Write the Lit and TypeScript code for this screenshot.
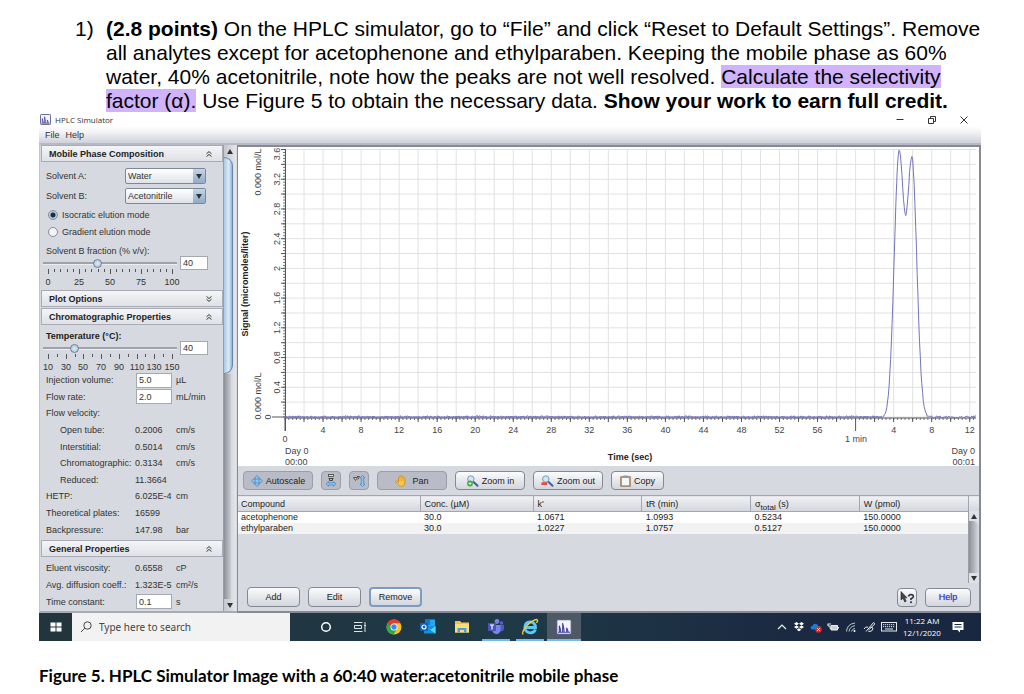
import { LitElement, html, svg, css, TemplateResult } from "lit";
import { customElement } from "lit/decorators.js";
import { classMap } from "lit/directives/class-map.js";

const range = (n: number): number[] => Array.from({ length: n }, (_, i) => i);

/* ---------- Chromatogram ---------- */

const X0 = 285;
const Y0 = 417;
const PX_PER_SEC = 9.51;
const PX_PER_UNIT = 74.3;

const xAt = (sec: number): number => X0 + sec * PX_PER_SEC;
const yAt = (v: number): number => Y0 - v * PX_PER_UNIT;

function tracePoints(): string {
  const peaks = [
    { t: 64.56, sigma: 0.505, h: 3.5 },
    { t: 65.94, sigma: 0.505, h: 3.41 },
  ];
  const pts: string[] = [];
  let seed = 11;
  for (let t = 0; t <= 72.7; t += 0.08) {
    seed = (seed * 1103515245 + 12345) % 2147483648;
    const noise = (seed / 2147483648 - 0.5) * 0.035;
    const v = peaks.reduce((s, p) => s + p.h * Math.exp(-((t - p.t) ** 2) / (2 * p.sigma ** 2)), 0);
    pts.push(`${xAt(t).toFixed(1)},${yAt(v + noise).toFixed(1)}`);
  }
  return pts.join(" ");
}

@customElement("signal-plot")
export class SignalPlot extends LitElement {
  static styles = css`
    :host { display: block; background: #fff; }
    svg { display: block; width: 100%; height: auto; }
    text { font: 9px "Liberation Sans", Arial, sans-serif; fill: #444; }
    .title { font-weight: bold; fill: #222; }
    .grid { stroke: #e2e2e2; stroke-width: 1; }
    .axis { stroke: #555; stroke-width: 1; }
    .minor { stroke: #777; stroke-width: 1; }
    .trace { fill: none; stroke: #7474bd; stroke-width: 1; }
    .base { stroke: #7474bd; stroke-width: 1; }
    .mid { text-anchor: middle; }
    .end { text-anchor: end; }
  `;

  render() {
    const ySteps = range(19);
    const xSteps = range(37);
    return html`<svg viewBox="238 147 741 319" role="img" aria-label="Signal against time">
      ${ySteps.map((i) => svg`<line class="grid" x1=${X0} x2="976" y1=${yAt(i * 0.2)} y2=${yAt(i * 0.2)} />`)}
      ${xSteps.map((i) => svg`<line class="grid" x1=${xAt(i * 2)} x2=${xAt(i * 2)} y1="149" y2=${Y0} />`)}
      ${range(91).map((i) => svg`<line class="minor" x1="283" x2="285" y1=${yAt(i * 0.04)} y2=${yAt(i * 0.04)} />`)}
      ${ySteps.map((i) => svg`<line class="axis" x1=${i === 0 ? 272 : 281} x2="285" y1=${yAt(i * 0.2)} y2=${yAt(i * 0.2)} />`)}
      ${range(182).map((i) => svg`<line class="minor" x1=${xAt(i * 0.4)} x2=${xAt(i * 0.4)} y1="418" y2="420" />`)}
      ${xSteps.map((i) => svg`<line class="axis" x1=${xAt(i * 2)} x2=${xAt(i * 2)} y1="418" y2=${i % 30 === 0 ? 431 : 422} />`)}
      <line class="axis" x1="285.5" x2="285.5" y1="149" y2="431" />
      <line class="axis" x1="285" x2="976" y1="418" y2="418" />
      <line class="base" x1="285" x2="882" y1="417" y2="417" />
      <polyline class="trace" points=${tracePoints()} />
      ${range(10).map((i) => svg`<text class="mid" transform="translate(${i === 0 ? 271 : 280} ${i === 9 ? 154 : yAt(i * 0.4)}) rotate(-90)">${
        i === 0 ? "0" : String(Math.round(i * 4) / 10)}</text>`)}
      ${range(18).filter((i) => i !== 14).map((i) => {
        const sec = (i + 1) * 4;
        return svg`<text class="mid" x=${xAt(sec)} y="433">${sec % 60}</text>`;
      })}
      <text class="mid" x="285" y="442">0</text>
      <text class="mid" x="856" y="442">1 min</text>
      <text x="285" y="454">Day 0</text>
      <text x="285" y="465">00:00</text>
      <text class="end" x="975" y="454">Day 0</text>
      <text class="end" x="975" y="465">00:01</text>
      <text class="title mid" x="630" y="460">Time (sec)</text>
      <text class="title mid" transform="translate(248 284) rotate(-90)">Signal (micromoles/liter)</text>
      <text class="mid" transform="translate(261 172) rotate(-90)">0.000 mol/L</text>
      <text class="mid" transform="translate(261 396) rotate(-90)">0.000 mol/L</text>
    </svg>`;
  }
}

/* ---------- Icons ---------- */

const appIcon = (size: number) => html`<svg width=${size} height=${size} viewBox="0 0 12 12" aria-hidden="true">
  <rect x="0.5" y="0.5" width="11" height="11" rx="1" fill="#f4f4fb" stroke="#5a5a8c" />
  <path d="M1.500 10H10.500M2.500 10V5L3.500 8.500V10M5 10V3L6 8V10M8 10V6.500L9 9V10" fill="none" stroke="#40409a" stroke-width="0.800" /></svg>`;

const chevrons = (open: boolean) => html`<svg width="6" height="6" viewBox="0 0 6 6" aria-hidden="true">
  <path d=${open ? "M0.500 2.800L3 0.600L5.500 2.800M0.500 5.600L3 3.400L5.500 5.600" : "M0.500 0.400L3 2.600L5.500 0.400M0.500 3.200L3 5.400L5.500 3.200"}
    fill="none" stroke="#333" /></svg>`;

const arrow = (up: boolean) => html`<svg width="6" height="5" viewBox="0 0 6 5" aria-hidden="true">
  <path d=${up ? "M3 0L6 5H0Z" : "M0 0H6L3 5Z"} fill="#333" /></svg>`;

const autoscaleIcon = html`<svg width="12" height="12" viewBox="0 0 12 12" aria-hidden="true">
  <path d="M6 0.500L8.500 3H7V5H9V3.500L11.500 6L9 8.500V7H7V9H8.500L6 11.500L3.500 9H5V7H3V8.500L0.500 6L3 3.500V5H5V3H3.500Z" fill="#8fc4ee" stroke="#3f83c0" stroke-width="0.700" /></svg>`;

const autoXIcon = html`<svg width="12" height="13" viewBox="0 0 12 13" aria-hidden="true">
  <rect x="3.500" y="0.500" width="5" height="2" fill="#ddd" stroke="#444" stroke-width="0.800" />
  <path d="M3.500 4.500H8.500M4.500 4V6.500H7.500V4" fill="none" stroke="#444" />
  <path d="M1 9.800L3.500 7.500V8.700H8.500V7.500L11 9.800L8.500 12.200V11H3.500V12.200Z" fill="#8fc4ee" stroke="#3f83c0" stroke-width="0.700" /></svg>`;

const autoYIcon = html`<svg width="13" height="12" viewBox="0 0 13 12" aria-hidden="true">
  <path d="M0.500 2.500H4.500L2.500 5.500ZM4 1.500H6.500L5 4.500" fill="#ddd" stroke="#444" stroke-width="0.900" />
  <path d="M9.500 0.500L12 3H10.700V9H12L9.500 11.500L7 9H8.300V3H7Z" fill="#8fc4ee" stroke="#3f83c0" stroke-width="0.700" /></svg>`;

const handIcon = html`<svg width="12" height="12" viewBox="0 0 12 12" aria-hidden="true">
  <path d="M3.500 7.500V2.500Q4.200 1.500 5 2.500V1.200Q5.800 0.300 6.500 1.200V1.800Q7.400 0.900 8.200 1.900V3Q9.300 2.300 9.900 3.300V8Q9.500 11.300 6.500 11.500Q4 11.500 2.800 9.500L0.700 6.500Q1.200 5.200 2.300 6Z" fill="#f8c64b" stroke="#c98a1c" stroke-width="0.800" />
  <path d="M5 2.500V6M6.600 2V6M8.200 3V6" stroke="#d99a2a" stroke-width="0.600" /></svg>`;

const zoomIcon = (plus: boolean) => html`<svg width="13" height="12" viewBox="0 0 13 12" aria-hidden="true">
  <path d="M7 6.500L11.500 10.800" stroke="#3a62a0" stroke-width="2" stroke-linecap="round" />
  <circle cx="4.800" cy="4" r="3.200" fill="#cfe6f7" stroke="#7d9bb5" />
  ${plus
    ? svg`<circle cx="4" cy="8.500" r="2.900" fill="#43a843" /><path d="M4 7V10M2.500 8.500H5.500" stroke="#d8f5d8" />`
    : svg`<rect x="0.300" y="7.300" width="6" height="2.800" rx="0.600" fill="#e2503c" />`}</svg>`;

const copyIcon = html`<svg width="11" height="12" viewBox="0 0 11 12" aria-hidden="true">
  <rect x="0.700" y="1.700" width="9.600" height="9.600" fill="#c69763" stroke="#9a7044" stroke-width="0.700" />
  <rect x="2" y="3" width="7" height="7.200" fill="#eef8ff" /><rect x="3.500" y="0.500" width="4" height="2" fill="#999" /></svg>`;

const helpPointer = html`<svg width="15" height="13" viewBox="0 0 15 13" aria-hidden="true">
  <path d="M1 0.500V9L3 7.200L4.800 11L6.200 10.200L4.500 6.800H7Z" fill="#444" stroke="#222" stroke-width="0.600" />
  <path d="M8.500 5.500Q8.800 3.500 11 3.500Q13.500 3.600 13.300 5.700Q13.100 7 11 7.800V9" fill="none" stroke="#334" stroke-width="1.700" />
  <rect x="10.100" y="10.300" width="1.800" height="1.800" fill="#334" /></svg>`;

const taskIcons: { name: string; cls: string; icon: TemplateResult }[] = [
  { name: "Cortana", cls: "", icon: html`<svg width="18" height="18" viewBox="0 0 18 18"><circle cx="9" cy="9" r="4.300" fill="none" stroke="#fff" stroke-width="1.500" /></svg>` },
  { name: "Task View", cls: "", icon: html`<svg width="18" height="18" viewBox="0 0 18 18"><path d="M3 4.500H11.500M3 13.500H11.500M3.500 7.500H10.500V10.500H3.500ZM14 4V14M13 7.500H15" fill="none" stroke="#dfe4e6" /></svg>` },
  { name: "Chrome", cls: "", icon: html`<svg width="18" height="18" viewBox="0 0 18 18"><circle cx="9" cy="9" r="7.500" fill="#fbc116" /><path d="M9 9L5.750 7L2.500 5.250A7.500 7.500 0 0 0 8.500 16.500L12 11Z" fill="#2da94f" /><path d="M5.750 8L2.500 5.250A7.500 7.500 0 0 1 15.500 5.250H9Z" fill="#e33b2e" /><circle cx="9" cy="9" r="3.500" fill="#fff" /><circle cx="9" cy="9" r="2.700" fill="#4285f4" /></svg>` },
  { name: "Outlook", cls: "", icon: html`<svg width="18" height="18" viewBox="0 0 18 18"><rect x="6" y="1.500" width="10" height="12" fill="#28a8ea" /><path d="M6 1.500H11V7H6Z" fill="#0f78d4" /><path d="M5 8L16.500 8V15.500H5Z" fill="#1490df" /><path d="M7 9L11 12L16.500 8V15.500" fill="#50d9ff" /><rect x="1" y="5" width="8" height="8" rx="0.700" fill="#0a64b8" /><circle cx="5" cy="9" r="2" fill="none" stroke="#fff" stroke-width="1.200" /></svg>` },
  { name: "File Explorer", cls: "", icon: html`<svg width="18" height="18" viewBox="0 0 18 18"><path d="M2 3H7L8.500 4.500H16V14.500H2Z" fill="#f6c143" /><path d="M2 6H16V14.500H2Z" fill="#fddc7c" /><path d="M4.500 14.500V10H13.500V14.500H11V12H7V14.500Z" fill="#4a9fe0" /></svg>` },
  { name: "Teams", cls: "running", icon: html`<svg width="18" height="18" viewBox="0 0 18 18"><circle cx="14.500" cy="5" r="1.700" fill="#5b62c4" /><circle cx="10" cy="3.500" r="2.400" fill="#7b83eb" /><path d="M12 7H17V11Q16.500 14 13 13.500Z" fill="#5059c9" /><path d="M5 7H13.500V12Q13 16 9.500 16.200Q6 16 5 12Z" fill="#7b83eb" /><rect x="1" y="5" width="8" height="8" rx="0.700" fill="#4b53bc" /><path d="M3 7H7M5 7V11.500" stroke="#fff" stroke-width="1.200" /></svg>` },
  { name: "Internet Explorer", cls: "running", icon: html`<svg width="18" height="18" viewBox="0 0 18 18"><path d="M14.500 11.500Q13.200 14.800 9.200 14.800Q4 14.500 3.800 9.300Q4 4 9.200 3.800Q14.300 4 14.500 9.500H5" fill="none" stroke="#5cc8f5" stroke-width="2.800" /><path d="M2 16.500Q0.500 14 5.500 8Q12 1.500 15.800 1.500Q17.500 2 15.500 5" fill="none" stroke="#f3cf45" stroke-width="1.300" /></svg>` },
  { name: "HPLC Simulator", cls: "active", icon: appIcon(16) },
];

const trayIcons: { name: string; icon: TemplateResult }[] = [
  { name: "Show hidden icons", icon: html`<svg width="12" height="12" viewBox="0 0 12 12"><path d="M2 8L6 4L10 8" fill="none" stroke="#eee" stroke-width="1.200" /></svg>` },
  { name: "Dropbox", icon: html`<svg width="12" height="12" viewBox="0 0 12 12"><path d="M3.500 1L6 2.700L3.500 4.400L1 2.700ZM8.500 1L11 2.700L8.500 4.400L6 2.700ZM3.500 4.400L6 6.100L3.500 7.800L1 6.100ZM8.500 4.400L11 6.100L8.500 7.800L6 6.100ZM6 7.200L8.300 8.700L6 10.300L3.700 8.700Z" fill="#fff" /></svg>` },
  { name: "OneDrive", icon: html`<svg width="12" height="12" viewBox="0 0 12 12"><path d="M2.500 8.500Q0 8 0.800 6Q1.500 4.800 2.500 5Q3.500 2 6.300 3Q8 3.500 8.200 5Q11 5 11 7Q10.500 8.500 9 8.500Z" fill="#1680d8" /><circle cx="8.500" cy="8.500" r="3.200" fill="#d92b2b" /><path d="M7.200 7.200L9.800 9.800M9.800 7.200L7.200 9.800" stroke="#fff" /></svg>` },
  { name: "Battery", icon: html`<svg width="12" height="12" viewBox="0 0 12 12"><path d="M4 4.500H10.500V9H4Z" fill="#ccc" stroke="#eee" /><path d="M11.500 6V7.500M0.500 3H4M1 3V5H3V7.500H4" stroke="#eee" fill="none" /></svg>` },
  { name: "Wi-Fi", icon: html`<svg width="12" height="12" viewBox="0 0 12 12"><path d="M1.500 10.500Q2 3 10 2M4 10.500Q4.500 5.500 10 4.700M6.500 10.500Q7 8 10 7.400" fill="none" stroke="#bcc6cf" /><circle cx="9.500" cy="10" r="1" fill="#fff" /></svg>` },
  { name: "Pen", icon: html`<svg width="14" height="12" viewBox="0 0 14 12"><path d="M3 10.500L10.500 1.500L12 2.800L5.500 9M1 8Q2 5.500 5 6M5.500 10.500Q9 11 10 8Q10 5.500 7.500 6.500" fill="none" stroke="#e6eaee" /></svg>` },
  { name: "Keyboard", icon: html`<svg width="16" height="12" viewBox="0 0 16 12"><rect x="0.500" y="1.500" width="15" height="8.500" fill="none" stroke="#e6eaee" /><path d="M2 3.700H14M2 5.700H14" stroke="#e6eaee" stroke-dasharray="1.200 0.800" /><path d="M4 8H12" stroke="#e6eaee" /></svg>` },
];

/* ---------- Application ---------- */

type Row = { label: string; value: string; unit?: string; indent?: boolean; edit?: boolean };

const chromatographic: Row[] = [
  { label: "Injection volume:", value: "5.0", unit: "µL", edit: true },
  { label: "Flow rate:", value: "2.0", unit: "mL/min", edit: true },
  { label: "Flow velocity:", value: "" },
  { label: "Open tube:", value: "0.2006", unit: "cm/s", indent: true },
  { label: "Interstitial:", value: "0.5014", unit: "cm/s", indent: true },
  { label: "Chromatographic:", value: "0.3134", unit: "cm/s", indent: true },
  { label: "Reduced:", value: "11.3664", indent: true },
  { label: "HETP:", value: "6.025E-4", unit: "cm" },
  { label: "Theoretical plates:", value: "16599" },
  { label: "Backpressure:", value: "147.98", unit: "bar" },
];

const general: Row[] = [
  { label: "Eluent viscosity:", value: "0.6558", unit: "cP" },
  { label: "Avg. diffusion coeff.:", value: "1.323E-5", unit: "cm²/s" },
  { label: "Time constant:", value: "0.1", unit: "s", edit: true },
];

const compounds = [
  ["acetophenone", "30.0", "1.0671", "1.0993", "0.5234", "150.0000"],
  ["ethylparaben", "30.0", "1.0227", "1.0757", "0.5127", "150.0000"],
];

@customElement("app-root")
export class AppRoot extends LitElement {
  static styles = css`
    :host { display: block; background: #fff; color: #000; font-family: "Liberation Sans", Arial, sans-serif; }
    * { box-sizing: border-box; }
    svg { display: block; flex: none; }
    button, input, select { font: inherit; color: inherit; margin: 0; border-radius: 0; }
    button { padding: 0; border: 0; background: none; }

    .page { padding: 17px 43px 0 39px; }
    .question { padding: 0 0 0 67px; display: flex; font-size: 21px; line-height: 24px; }
    .number { flex: none; width: 31px; margin-left: -31px; }
    .question p { margin: 0; flex: 1; }
    mark { background: #d0b3fb; color: inherit; }

    .window { font-size: 9px; line-height: 10px; color: #333; background: #d6d9df; }
    .titlebar { display: flex; align-items: center; height: 13px; padding: 0 11px 0 1px; background: #fff; font-size: 8px; font-family: "Open Sans", sans-serif; }
    .titlebar .name { flex: 1; margin-left: 4px; }
    .titlebar button { width: 12px; margin-left: 20px; display: flex; justify-content: center; }
    .menubar { display: flex; gap: 6px; height: 17px; align-items: center; padding-left: 6px; background: linear-gradient(#fff, #f0f1f4 40%, #cfd1da); }
    .body { display: grid; grid-template-columns: 198px minmax(0, 1fr); border-top: 2px solid #b7b9c5; }

    .side { display: grid; grid-template-columns: 184px 12px; border-bottom: 2px solid #a8abb5; border-left: 1px solid #c3c6cf; height: 468px; overflow: hidden; }
    .panels { padding-left: 1px; border-right: 1px solid #9a9da6; }
    .section-head { display: flex; width: 100%; height: 17px; align-items: center; justify-content: space-between; padding: 0 10px 0 7px; font-weight: bold; color: #222; border: 1px solid #a9acb6; background: linear-gradient(#f4f5f7, #dfe1e6); }
    .gap-above { margin-top: 1px; }
    .section { padding-left: 5px; }
    .solvents { padding-top: 4px; }
    .solvent { display: grid; grid-template-columns: 79px 81px; height: 20px; align-items: center; }
    .combo { display: grid; grid-template-columns: 1fr 12px; height: 16px; border: 1px solid #7c8798; border-radius: 2px; background: linear-gradient(#fff, #dfe2e8); overflow: hidden; }
    .combo select { grid-area: 1 / 1 / 2 / 3; appearance: none; border: 0; background: none; padding: 0 0 0 2px; }
    .combo span { grid-area: 1 / 2; display: grid; place-items: center; background: linear-gradient(#c3d5e8, #8fabc9); pointer-events: none; }
    .radio { display: flex; align-items: center; gap: 4px; height: 17px; padding-left: 2px; }
    .radio input { appearance: none; width: 10px; height: 10px; border: 1px solid #858b96; border-radius: 50%; background: #f3f4f6; }
    .radio input:checked { background: radial-gradient(#1f2b3a 2px, #b4cde4 3px); }
    .slider-label { display: block; margin-top: 6px; }
    .bold { font-weight: bold; color: #222; }
    .slider { display: grid; grid-template-columns: 136px 29px; height: 34px; margin-left: -3px; }
    .slider.compact { height: 31px; }
    .slider input[type="range"] { appearance: none; display: block; width: 134px; height: 12px; margin: 1px 0 0; background: none; }
    .slider input[type="range"]::-webkit-slider-runnable-track { height: 3px; background: #9ea2ab; border-bottom: 1px solid #eceef2; }
    .slider input[type="range"]::-webkit-slider-thumb { appearance: none; width: 9px; height: 9px; margin-top: -3px; border: 1px solid #6d8197; border-radius: 50%; background: radial-gradient(#dce9f5, #a7bfd6); }
    .slider svg text { font-size: 9px; fill: #333; text-anchor: middle; }
    .slider svg { overflow: visible; }
    .field { width: 36px; height: 15px; margin-left: 1px; padding: 0 2px; border: 1px solid #a5a8b0; background: #fff; }
    .slider .field { width: 28px; height: 14px; }
    .rows { display: grid; height: 166px; grid-auto-rows: 1fr; }
    .rows.short { height: 51px; margin-top: 2px; }
    .row { display: grid; grid-template-columns: 89px 41px 1fr; align-items: center; white-space: nowrap; }
    .indent { padding-left: 14px; }
    .last-head { margin-top: 2px; }

    .vscroll { display: flex; flex-direction: column; align-items: center; background: linear-gradient(90deg, #c4c7ce, #e4e6ea); }
    .vscroll svg { margin: 4px 0 3px; }
    .vscroll .thumb { width: 9px; height: 217px; align-self: flex-start; border: 1px solid #6685a6; border-left: 0; border-radius: 0 9px 9px 0; background: linear-gradient(90deg, #a9c9e6, #dcecf8 60%, #8fb3d6); }
    .vscroll .track { flex: 1; width: 7px; align-self: flex-start; background: linear-gradient(90deg, #8d9098, #c9ccd2); }

    .main { display: flex; flex-direction: column; border: 1px solid #878a95; border-width: 2px 2px 2px 1px; }
    .tools { display: flex; align-items: center; height: 29px; padding-left: 5px; gap: 8px; }
    .btn { display: flex; align-items: center; justify-content: center; gap: 3px; height: 19px; width: 70px; color: #222; border: 1px solid #858994; border-radius: 4px; background: linear-gradient(#fcfcfd, #e6e8ec 50%, #d3d6dd); }
    .btn.on { background: #b9bcc6; border-color: #9a9daa; }
    .btn.small { width: 20px; }
    .btn.copy { width: 53px; }
    .btn.pan { gap: 5px; }
    .btn.plain { width: 53px; height: 20px; }
    .btn.focus { border: 2px solid #7d9cc0; }
    .grow { flex: 1; }
    .btn.help { width: 46px; color: #3030b8; text-shadow: 0 0 1px #8c8ce0; }

    .table-area { display: grid; height: 88px; align-items: start; }
    table { grid-area: 1 / 1; width: 100%; table-layout: fixed; border-collapse: collapse; color: #222; }
    th { height: 16px; padding: 0 3px; text-align: left; font-weight: normal; border: 1px solid #a3a6b0; border-width: 1px 0 1px 1px; background: linear-gradient(#f0f1f4, #d3d6dd); white-space: nowrap; }
    th:first-child { width: 182px; border-left: 0; }
    th:nth-child(2) { width: 113px; }
    th.scroll-col { width: 11px; padding: 0; }
    td { height: 11px; line-height: 11px; padding: 0 3px; background: #fff; }
    th:not(:first-child), td:not(:first-child) { padding-left: 4px; }
    tbody tr:nth-child(2) td { background: #f2f2f2; }
    sub { font-size: 8px; vertical-align: -3px; line-height: 0; }
    .list-scroll { grid-area: 1 / 1; justify-self: end; margin-top: 16px; width: 11px; height: 72px; display: flex; flex-direction: column; align-items: center; background: #dfe1e6; border-left: 1px solid #9a9da6; }
    .list-scroll svg { margin: 3px 0 2px; }
    .list-scroll .bar { flex: 1; width: 100%; background: linear-gradient(90deg, #8d9098, #d9dbe0); border-radius: 0 6px 0 0; }
    .foot { display: flex; align-items: center; height: 28px; padding: 0 8px 0 9px; gap: 8px; }

    .taskbar { display: flex; height: 28px; background: linear-gradient(90deg, #22343c, #1f3947 50%, #1a2740 85%); color: #fff; }
    .taskbar button { display: grid; place-items: center; flex: none; width: 34px; height: 28px; }
    .taskbar button.start { width: 33px; }
    .search { display: flex; align-items: center; gap: 7px; width: 218px; padding-left: 8px; background: #f2f2f2; margin-right: 19px; }
    .search input { border: 0; background: none; padding: 0; width: 160px; font: 10px "Noto Sans", sans-serif; outline: 0; }
    .search input::placeholder { color: #444; opacity: 1; }
    .taskbar button.running { background: linear-gradient(#76b9ed, #76b9ed) center bottom / 28px 2px no-repeat; }
    .taskbar button.active { background: linear-gradient(#76b9ed, #76b9ed) center bottom / 100% 2px no-repeat #4d5a66; }
    .tray { display: flex; margin-left: auto; align-items: center; }
    .taskbar .tray button { width: 17px; }
    .taskbar .tray button:nth-child(n + 5) { width: 19px; }
    .clock { margin-left: 3px; width: 42px; text-align: center; font: 8px/12px "Open Sans", sans-serif; white-space: nowrap; }
    .taskbar .tray button.notes:last-child { width: 30px; margin-right: 8px; }

    .caption { margin: 25px 0 0; font: bold 17px/20px Lato, sans-serif; }
  `;

  private row(r: Row, i: number, group: string) {
    const id = `${group}-${i}`;
    return html`<div class="row">
      ${r.edit ? html`<label for=${id}>${r.label}</label><input class="field" id=${id} .value=${r.value} />`
        : html`<span class=${classMap({ indent: !!r.indent })}>${r.label}</span><span>${r.value}</span>`}
      <span>${r.unit ?? ""}</span>
    </div>`;
  }

  private slider(id: string, min: number, max: number, step: number, major: number, labels: number[], compact = false) {
    const n = (max - min) / step;
    const at = (v: number) => 5 + Math.round(((v - min) / (max - min)) * 124);
    return html`<div class=${classMap({ slider: true, compact })}>
      <div>
        <input id=${id} type="range" min=${min} max=${max} .value=${"40"} />
        <svg width="134" height="18" viewBox="0 0 134 18" aria-hidden="true">
          ${range(n + 1).map((i) => svg`<rect x=${at(min + i * step)} y="0" width="1" height=${i % major === 0 ? 5 : 3} fill="#555" />`)}
          ${labels.map((v) => svg`<text x=${at(v)} y="16">${v}</text>`)}
        </svg>
      </div>
      <input class="field" aria-label="Value" .value=${"40"} />
    </div>`;
  }

  private head(title: string, open: boolean, cls = "") {
    return html`<button class="section-head ${cls}" aria-expanded=${open ? "true" : "false"}><span>${title}</span>${chevrons(open)}</button>`;
  }

  private solvent(id: string, label: string, value: string) {
    return html`<div class="solvent"><label for=${id}>${label}</label>
      <div class="combo"><select id=${id}><option>${value}</option></select><span>${arrow(false)}</span></div></div>`;
  }

  render() {
    return html`<main class="page">
      <div class="question"><span class="number">1)</span>
        <p><b>(2.8 points)</b> On the HPLC simulator, go to “File” and click “Reset to Default Settings”. Remove
        all analytes except for acetophenone and ethylparaben. Keeping the mobile phase as 60%
        water, 40% acetonitrile, note how the peaks are not well resolved. <mark>Calculate the selectivity
        factor (α).</mark> Use Figure 5 to obtain the necessary data. <b>Show your work to earn full credit.</b></p>
      </div>

      <section class="window">
        <div class="titlebar">${appIcon(11)}<span class="name">HPLC Simulator</span>
          <button aria-label="Minimize"><svg width="8" height="8" viewBox="0 0 8 8"><path d="M0.500 3.500H7.500" stroke="#333" /></svg></button>
          <button aria-label="Restore"><svg width="8" height="8" viewBox="0 0 8 8"><path d="M0.500 2.500H5.500V7.500H0.500ZM2.500 2.500V0.500H7.500V5.500H5.500" fill="none" stroke="#333" /></svg></button>
          <button aria-label="Close"><svg width="8" height="8" viewBox="0 0 8 8"><path d="M0.500 0.500L7.500 7.500M7.500 0.500L0.500 7.500" stroke="#333" /></svg></button>
        </div>
        <nav class="menubar"><button>File</button><button>Help</button></nav>

        <div class="body">
          <aside class="side">
            <div class="panels">
              ${this.head("Mobile Phase Composition", true)}
              <div class="section solvents">
                ${this.solvent("sa", "Solvent A:", "Water")}
                ${this.solvent("sb", "Solvent B:", "Acetonitrile")}
                <label class="radio"><input type="radio" name="mode" checked />Isocratic elution mode</label>
                <label class="radio"><input type="radio" name="mode" />Gradient elution mode</label>
                <label class="slider-label" for="frac">Solvent B fraction (% v/v):</label>
                ${this.slider("frac", 0, 100, 5, 5, [0, 25, 50, 75, 100])}
              </div>
              ${this.head("Plot Options", false)}
              ${this.head("Chromatographic Properties", true, "gap-above")}
              <div class="section">
                <label class="slider-label bold" for="temp">Temperature (°C):</label>
                ${this.slider("temp", 10, 150, 10, 2, [10, 30, 50, 70, 90, 110, 130, 150], true)}
                <div class="rows">${chromatographic.map((r, i) => this.row(r, i, "chrom"))}</div>
              </div>
              ${this.head("General Properties", true, "last-head")}
              <div class="section"><div class="rows short">${general.map((r, i) => this.row(r, i, "gen"))}</div></div>
            </div>
            <div class="vscroll">${arrow(true)}<div class="thumb"></div><div class="track"></div>${arrow(false)}</div>
          </aside>

          <div class="main">
            <signal-plot></signal-plot>
            <div class="tools">
              <button class="btn on">${autoscaleIcon}Autoscale</button>
              <button class="btn on small" aria-label="Autoscale X">${autoXIcon}</button>
              <button class="btn on small" aria-label="Autoscale Y">${autoYIcon}</button>
              <button class="btn on pan">${handIcon}Pan</button>
              <button class="btn">${zoomIcon(true)}Zoom in</button>
              <button class="btn">${zoomIcon(false)}Zoom out</button>
              <button class="btn copy">${copyIcon}Copy</button>
            </div>
            <div class="table-area">
              <table>
                <thead><tr><th>Compound</th><th>Conc. (µM)</th><th>k'</th><th>tR (min)</th><th>σ<sub>total</sub> (s)</th><th>W (pmol)</th><th class="scroll-col"></th></tr></thead>
                <tbody>${compounds.map((c) => html`<tr>${c.map((v) => html`<td>${v}</td>`)}<td></td></tr>`)}</tbody>
              </table>
              <div class="list-scroll">${arrow(true)}<div class="bar"></div>${arrow(false)}</div>
            </div>
            <div class="foot">
              <button class="btn plain">Add</button><button class="btn plain">Edit</button><button class="btn plain focus">Remove</button>
              <span class="grow"></span>
              <button class="btn small" aria-label="Context help">${helpPointer}</button><button class="btn help">Help</button>
            </div>
          </div>
        </div>

        <div class="taskbar">
          <button class="start" aria-label="Start"><svg width="12" height="12" viewBox="0 0 12 12"><path d="M0.500 1.500H5.500V5.500H0.500ZM6.500 1.500H11.500V5.500H6.500ZM0.500 6.500H5.500V10.500H0.500ZM6.500 6.500H11.500V10.500H6.500Z" fill="#fff" /></svg></button>
          <div class="search"><svg width="12" height="12" viewBox="0 0 12 12"><circle cx="7.500" cy="4.500" r="3.700" fill="none" stroke="#444" /><path d="M4.800 7.200L1 11" stroke="#444" /></svg>
            <input aria-label="Search" placeholder="Type here to search" /></div>
          ${taskIcons.map((t) => html`<button class=${t.cls} aria-label=${t.name}>${t.icon}</button>`)}
          <div class="tray">
            ${trayIcons.map((t) => html`<button aria-label=${t.name}>${t.icon}</button>`)}
            <div class="clock">11:22 AM<br />12/1/2020</div>
            <button class="notes" aria-label="Notifications"><svg width="12" height="12" viewBox="0 0 12 12"><path d="M0.500 1H11.500V9H8V11.500L5.500 9H0.500Z" fill="#fff" /><path d="M2.500 3.500H9.500M2.500 6H9.500" stroke="#1a2740" /></svg></button>
          </div>
        </div>
      </section>

      <p class="caption">Figure 5. HPLC Simulator Image with a 60:40 water:acetonitrile mobile phase</p>
    </main>`;
  }
}
